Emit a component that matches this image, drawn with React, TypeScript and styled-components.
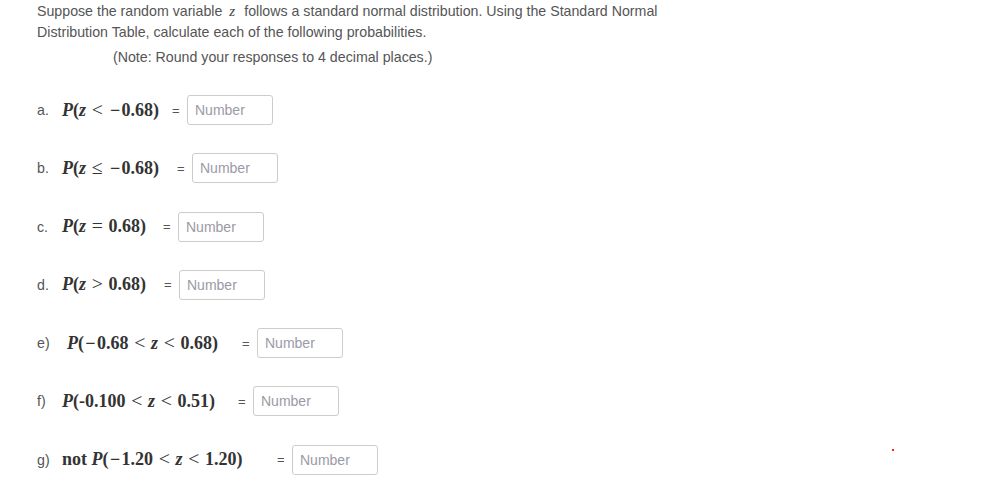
import styled, { createGlobalStyle } from 'styled-components'

const Global = createGlobalStyle`
  body {
    margin: 0;
    background: #fff;
    font-family: "Liberation Sans", Arial, sans-serif;
  }
`

const Page = styled.div`
  padding: 1px 0 0 37px;
  color: #555;
  font-size: 14.2px;
`

const Intro = styled.p`
  margin: 0;
  width: 640px;
  line-height: 21px;
`

const Note = styled.p`
  margin: 4px 0 0 76px;
  line-height: 21px;
`

const List = styled.div`
  display: flex;
  flex-direction: column;
  gap: 28.3px;
  margin-top: 27px;
`

const Row = styled.div`
  display: flex;
  align-items: center;
  height: 30px;
`

const Label = styled.span<{ $w: number }>`
  width: ${(p) => p.$w}px;
  flex: none;
`

const MathExpr = styled.span<{ $w: number }>`
  width: ${(p) => p.$w}px;
  flex: none;
  font-family: "Liberation Serif", "Times New Roman", serif;
  font-weight: bold;
  font-size: 18px;
  color: #333;
  white-space: nowrap;
`

const V = styled.i`
  font-style: italic;
`

const Rel = styled.span`
  display: inline-block;
  width: 22.5px;
  text-align: center;
  font-weight: normal;
  font-size: 1.1em;
  line-height: 1;
`

const Minus = styled.span`
  display: inline-block;
  width: 13px;
  text-align: center;
`

const Equals = styled.span`
  width: 15px;
  flex: none;
  color: #555;
  font-size: 13px;
`

const Input = styled.input`
  box-sizing: border-box;
  width: 86px;
  height: 30px;
  padding: 0 7px;
  border: 1px solid #ccc;
  border-radius: 3px;
  font-family: "Liberation Sans", Arial, sans-serif;
  font-size: 14px;
  color: #555;
  outline: none;
  &::placeholder {
    color: #9a9aa6;
  }
`

const MathInline = styled.i`
  display: inline-block;
  font-family: "Liberation Serif", "Times New Roman", serif;
  font-size: 15px;
  line-height: 1;
  color: #444;
  margin: 0 9px 0 7px;
`

const Dot = styled.span`
  position: absolute;
  left: 892px;
  top: 449px;
  width: 2px;
  height: 2px;
  background: #f22;
`

type Item = { label: string; lw: number; mw: number; expr: React.ReactNode }

const items: Item[] = [
  {
    label: 'a.',
    lw: 25,
    mw: 110,
    expr: (
      <>
        <V>P</V>(<V>z</V>
        <Rel>&lt;</Rel>
        <Minus>−</Minus>0.68)
      </>
    ),
  },
  {
    label: 'b.',
    lw: 25,
    mw: 115,
    expr: (
      <>
        <V>P</V>(<V>z</V>
        <Rel>≤</Rel>
        <Minus>−</Minus>0.68)
      </>
    ),
  },
  {
    label: 'c.',
    lw: 25,
    mw: 101,
    expr: (
      <>
        <V>P</V>(<V>z</V>
        <Rel>=</Rel>0.68)
      </>
    ),
  },
  {
    label: 'd.',
    lw: 25,
    mw: 102,
    expr: (
      <>
        <V>P</V>(<V>z</V>
        <Rel>&gt;</Rel>0.68)
      </>
    ),
  },
  {
    label: 'e)',
    lw: 30,
    mw: 175,
    expr: (
      <>
        <V>P</V>(<Minus>−</Minus>0.68<Rel>&lt;</Rel>
        <V>z</V>
        <Rel>&lt;</Rel>0.68)
      </>
    ),
  },
  {
    label: 'f)',
    lw: 25,
    mw: 176,
    expr: (
      <>
        <V>P</V>(-0.100<Rel>&lt;</Rel>
        <V>z</V>
        <Rel>&lt;</Rel>0.51)
      </>
    ),
  },
  {
    label: 'g)',
    lw: 25,
    mw: 215,
    expr: (
      <>
        not <V>P</V>(<Minus>−</Minus>1.20<Rel>&lt;</Rel>
        <V>z</V>
        <Rel>&lt;</Rel>1.20)
      </>
    ),
  },
]

export default function App() {
  return (
    <Page>
      <Global />
      <Intro>
        Suppose the random variable<MathInline>z</MathInline>follows a
        standard normal distribution. Using the Standard Normal Distribution
        Table, calculate each of the following probabilities.
      </Intro>
      <Note>(Note: Round your responses to 4 decimal places.)</Note>
      <List>
        {items.map((it) => (
          <Row key={it.label}>
            <Label $w={it.lw}>{it.label}</Label>
            <MathExpr $w={it.mw}>{it.expr}</MathExpr>
            <Equals>=</Equals>
            <Input placeholder="Number" />
          </Row>
        ))}
      </List>
      <Dot />
    </Page>
  )
}
